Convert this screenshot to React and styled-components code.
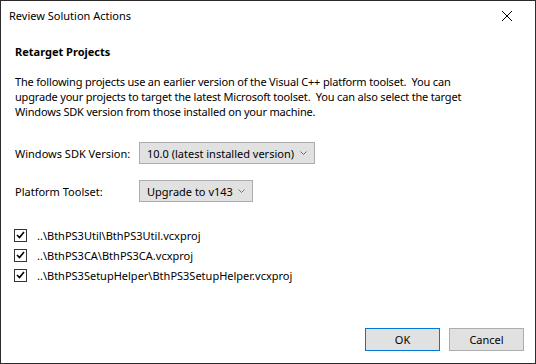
import styled, { createGlobalStyle } from "styled-components";

const GlobalStyle = createGlobalStyle`
  html, body {
    margin: 0;
    padding: 0;
    background: #ffffff;
  }
  body {
    font-family: "Noto Sans", "Open Sans", sans-serif;
    font-size: 11px;
    color: #000000;
  }
`;

const Dialog = styled.div`
  box-sizing: border-box;
  width: 536px;
  height: 364px;
  border: 1px solid #2b2b2b;
  background: #ffffff;
  display: flex;
  flex-direction: column;
`;

const TitleBar = styled.div`
  height: 30px;
  display: flex;
  align-items: center;
  justify-content: space-between;
  padding: 0 23px 0 8px;
`;

const Title = styled.div`
  font-size: 11px;
  line-height: 14px;
`;

const CloseGlyph = styled.svg`
  width: 10px;
  height: 10px;
  display: block;
`;

const Content = styled.div`
  padding: 0 14px;
  display: flex;
  flex-direction: column;
`;

const Heading = styled.div`
  font-weight: bold;
  line-height: 16px;
  margin-top: 13px;
`;

const Paragraph = styled.p`
  margin: 14px 0 0;
  line-height: 15px;
  letter-spacing: -0.18px;
`;

const FormRow = styled.div`
  display: flex;
  align-items: center;
  margin-top: ${(p) => p.$top}px;
`;

const Label = styled.div`
  width: 124px;
  line-height: 15px;
`;

const Combo = styled.div`
  box-sizing: border-box;
  height: 22px;
  width: ${(p) => p.$width}px;
  background: #e1e1e1;
  border: 1px solid #adadad;
  display: flex;
  align-items: center;
  justify-content: space-between;
  padding: 0 7px 0 7px;
`;

const Chevron = styled.svg`
  width: 7px;
  height: 4px;
  display: block;
  flex-shrink: 0;
`;

const CheckList = styled.div`
  display: flex;
  flex-direction: column;
  margin-top: 23px;
`;

const CheckRow = styled.div`
  height: 20px;
  display: flex;
  align-items: center;
  gap: 10px;
`;

const Box = styled.div`
  box-sizing: border-box;
  width: 13px;
  height: 13px;
  border: 1px solid #333333;
  background: #ffffff;
  display: flex;
  align-items: center;
  justify-content: center;
  margin-left: -1px;
`;

const Footer = styled.div`
  margin-top: auto;
  display: flex;
  justify-content: flex-end;
  gap: 9px;
  padding: 0 11px 12px;
`;

const Button = styled.div`
  box-sizing: border-box;
  width: 75px;
  height: 23px;
  background: #e1e1e1;
  border: 1px solid ${(p) => (p.$default ? "#0078d7" : "#adadad")};
  display: flex;
  align-items: center;
  justify-content: center;
`;

const projects = [
  "..\\BthPS3Util\\BthPS3Util.vcxproj",
  "..\\BthPS3CA\\BthPS3CA.vcxproj",
  "..\\BthPS3SetupHelper\\BthPS3SetupHelper.vcxproj",
];

function ComboBox({ value, width }) {
  return (
    <Combo $width={width}>
      <span>{value}</span>
      <Chevron viewBox="0 0 7 4">
        <path d="M0.5 0.5 L3.5 3.5 L6.5 0.5" fill="none" stroke="#707070" strokeWidth="1" />
      </Chevron>
    </Combo>
  );
}

export default function App() {
  return (
    <>
      <GlobalStyle />
      <Dialog>
        <TitleBar>
          <Title>Review Solution Actions</Title>
          <CloseGlyph viewBox="0 0 10 10">
            <path d="M0 0 L10 10 M10 0 L0 10" stroke="#000" strokeWidth="1" />
          </CloseGlyph>
        </TitleBar>
        <Content>
          <Heading>Retarget Projects</Heading>
          <Paragraph>
            The following projects use an earlier version of the Visual C++ platform toolset.{"\u00a0 "}You can
            <br />
            upgrade your projects to target the latest Microsoft toolset.{"\u00a0 "}You can also select the target
            <br />
            Windows SDK version from those installed on your machine.
          </Paragraph>
          <FormRow $top={23}>
            <Label>Windows SDK Version:</Label>
            <ComboBox value="10.0 (latest installed version)" width={176} />
          </FormRow>
          <FormRow $top={16}>
            <Label>Platform Toolset:</Label>
            <ComboBox value="Upgrade to v143" width={114} />
          </FormRow>
          <CheckList>
            {projects.map((p) => (
              <CheckRow key={p}>
                <Box>
                  <svg width="9" height="8" viewBox="0 0 9 8">
                    <path d="M1 4 L3.5 6.5 L8 1" fill="none" stroke="#000" strokeWidth="1.6" />
                  </svg>
                </Box>
                <span>{p}</span>
              </CheckRow>
            ))}
          </CheckList>
        </Content>
        <Footer>
          <Button $default>OK</Button>
          <Button>Cancel</Button>
        </Footer>
      </Dialog>
    </>
  );
}
